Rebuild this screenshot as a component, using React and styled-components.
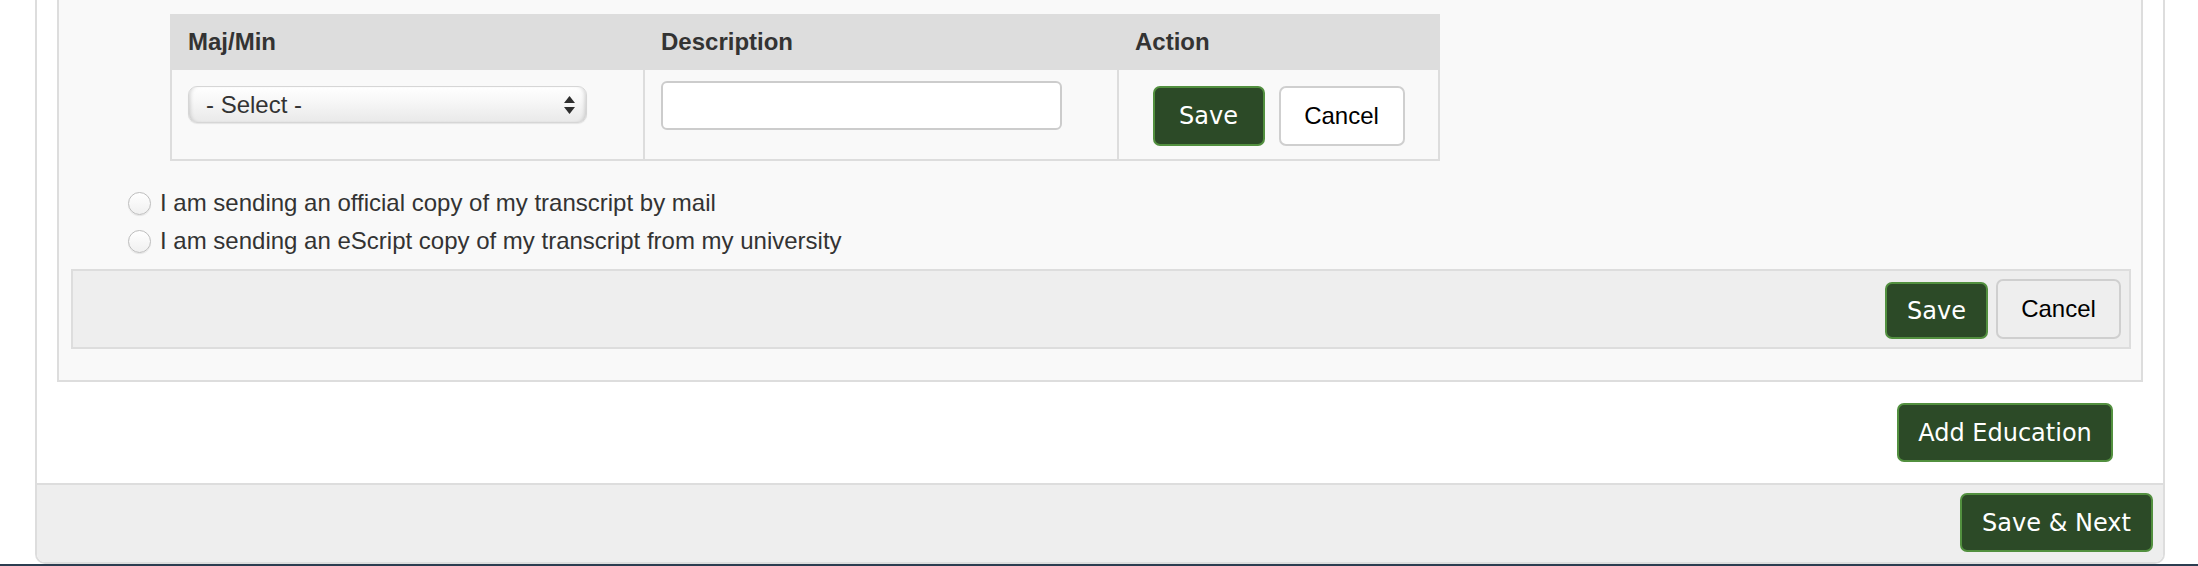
import React from 'react';
import styled, { createGlobalStyle } from 'styled-components';

const GlobalStyle = createGlobalStyle`
  html, body {
    margin: 0;
    padding: 0;
    background: #ffffff;
  }
  body {
    font-family: "Liberation Sans", Arial, sans-serif;
    color: #333333;
  }
`;

const Page = styled.div`
  width: 2198px;
`;

const OuterPanel = styled.div`
  margin-left: 35px;
  width: 2130px;
  box-sizing: border-box;
  background: #ffffff;
  border: 2px solid #dddddd;
  border-top: none;
  border-radius: 0 0 10px 10px;
  overflow: hidden;
`;

const Content = styled.div`
  padding: 0 20px;
`;

const InnerPanel = styled.div`
  background: #f9f9f9;
  border: 2px solid #dddddd;
  border-top: none;
  padding: 14px 10px 31px 12px;
`;

const Table = styled.table`
  margin-left: 99px;
  width: 1270px;
  table-layout: fixed;
  border-collapse: separate;
  border-spacing: 0;
  border: 2px solid #dddddd;
`;

const HeadCell = styled.th`
  background: #dddddd;
  text-align: left;
  font-weight: bold;
  font-size: 24px;
  line-height: 52px;
  padding: 0 16px;
  color: #333333;
  border-bottom: 2px solid #dddddd;
  border-right: ${p => (p.$last ? 'none' : '2px solid #dddddd')};
`;

const BodyCell = styled.td`
  vertical-align: top;
  padding: 11px 16px 13px;
  background: #f9f9f9;
  border-right: ${p => (p.$last ? 'none' : '2px solid #dddddd')};
`;

const SelectWrap = styled.div`
  position: relative;
  margin-top: 5px;
  width: 399px;
`;

const Select = styled.select`
  appearance: none;
  -webkit-appearance: none;
  display: block;
  width: 399px;
  height: 37px;
  margin: 0;
  padding: 0 40px 0 17px;
  font-family: "Liberation Sans", Arial, sans-serif;
  font-size: 24px;
  color: #333333;
  border: 1px solid #d6d6d6;
  border-radius: 9px;
  background: linear-gradient(to bottom, #ffffff 0%, #f6f6f6 45%, #e9e9e9 100%);
  box-shadow:
    inset 4px 0 4px -3px rgba(0, 0, 0, 0.18),
    inset -4px 0 4px -3px rgba(0, 0, 0, 0.18),
    0 1px 1px rgba(0, 0, 0, 0.08);
  outline: none;
`;

const Arrows = styled.svg`
  position: absolute;
  right: 12px;
  top: 10px;
  pointer-events: none;
`;

const TextInput = styled.input`
  display: block;
  box-sizing: border-box;
  width: 401px;
  height: 49px;
  margin: 0;
  background: #ffffff;
  border: 2px solid #cccccc;
  border-radius: 6px;
  font-size: 24px;
  font-family: "Liberation Sans", Arial, sans-serif;
  padding: 0 10px;
  outline: none;
`;

const ActionGroup = styled.div`
  display: flex;
  justify-content: center;
  gap: 14px;
  margin-top: 5px;
`;

const GreenButton = styled.button`
  box-sizing: border-box;
  width: ${p => p.$w}px;
  height: ${p => p.$h}px;
  padding: 0;
  background: #2c4a27;
  border: 2px solid #52903f;
  border-radius: 7px;
  color: #ffffff;
  font-family: "DejaVu Sans", Verdana, sans-serif;
  font-size: 24px;
  cursor: pointer;
`;

const PlainButton = styled.button`
  box-sizing: border-box;
  width: ${p => p.$w}px;
  height: ${p => p.$h}px;
  padding: 0;
  background: ${p => p.$bg};
  border: 2px solid #cfcfcf;
  border-radius: 7px;
  color: #000000;
  font-family: "Liberation Sans", Arial, sans-serif;
  font-size: 24px;
  cursor: pointer;
`;

const RadioList = styled.div`
  margin-top: 23px;
  padding-left: 57px;
`;

const RadioRow = styled.label`
  display: flex;
  align-items: center;
  height: 38px;
  font-size: 24px;
  color: #333333;
`;

const Radio = styled.input`
  appearance: none;
  -webkit-appearance: none;
  width: 23px;
  height: 23px;
  margin: 0 9px 0 0;
  border: 1px solid #bdbdbd;
  border-radius: 50%;
  background: linear-gradient(to bottom, #ffffff, #f0f0f0);
  box-shadow: 0 1px 1px rgba(0, 0, 0, 0.08);
`;

const FooterBar = styled.div`
  margin-top: 9px;
  display: flex;
  justify-content: flex-end;
  align-items: flex-end;
  gap: 8px;
  padding: 8px 8px;
  background: #eeeeee;
  border: 2px solid #dddddd;
`;

const AddRow = styled.div`
  display: flex;
  justify-content: flex-end;
  padding: 21px 30px 21px 0;
`;

const OuterFooter = styled.div`
  display: flex;
  justify-content: flex-end;
  padding: 8px 10px 10px;
  background: #eeeeee;
  border-top: 2px solid #dddddd;
`;

const BottomStrip = styled.div`
  height: 3px;
  background: #2b3d50;
`;

const SelectArrows = () => (
  <Arrows width="11" height="18" viewBox="0 0 11 18">
    <path d="M5.5 0 L11 7 L0 7 Z" fill="#2e2e2e" />
    <path d="M0 11 L11 11 L5.5 18 Z" fill="#2e2e2e" />
  </Arrows>
);

export default function App() {
  return (
    <Page>
      <GlobalStyle />
      <OuterPanel>
        <Content>
          <InnerPanel>
            <Table>
              <colgroup>
                <col style={{ width: 473 }} />
                <col style={{ width: 474 }} />
                <col style={{ width: 319 }} />
              </colgroup>
              <thead>
                <tr>
                  <HeadCell>Maj/Min</HeadCell>
                  <HeadCell>Description</HeadCell>
                  <HeadCell $last>Action</HeadCell>
                </tr>
              </thead>
              <tbody>
                <tr>
                  <BodyCell>
                    <SelectWrap>
                      <Select defaultValue="">
                        <option value="">- Select -</option>
                        <option value="major">Major</option>
                        <option value="minor">Minor</option>
                      </Select>
                      <SelectArrows />
                    </SelectWrap>
                  </BodyCell>
                  <BodyCell>
                    <TextInput type="text" />
                  </BodyCell>
                  <BodyCell $last>
                    <ActionGroup>
                      <GreenButton $w={112} $h={60}>Save</GreenButton>
                      <PlainButton $w={126} $h={60} $bg="#ffffff">Cancel</PlainButton>
                    </ActionGroup>
                  </BodyCell>
                </tr>
              </tbody>
            </Table>

            <RadioList>
              <RadioRow>
                <Radio type="radio" name="transcript" />
                I am sending an official copy of my transcript by mail
              </RadioRow>
              <RadioRow>
                <Radio type="radio" name="transcript" />
                I am sending an eScript copy of my transcript from my university
              </RadioRow>
            </RadioList>

            <FooterBar>
              <GreenButton $w={103} $h={57}>Save</GreenButton>
              <PlainButton $w={125} $h={60} $bg="#eeeeee">Cancel</PlainButton>
            </FooterBar>
          </InnerPanel>

          <AddRow>
            <GreenButton $w={216} $h={59}>Add Education</GreenButton>
          </AddRow>
        </Content>

        <OuterFooter>
          <GreenButton $w={193} $h={59}>Save &amp; Next</GreenButton>
        </OuterFooter>
      </OuterPanel>
      <BottomStrip />
    </Page>
  );
}
